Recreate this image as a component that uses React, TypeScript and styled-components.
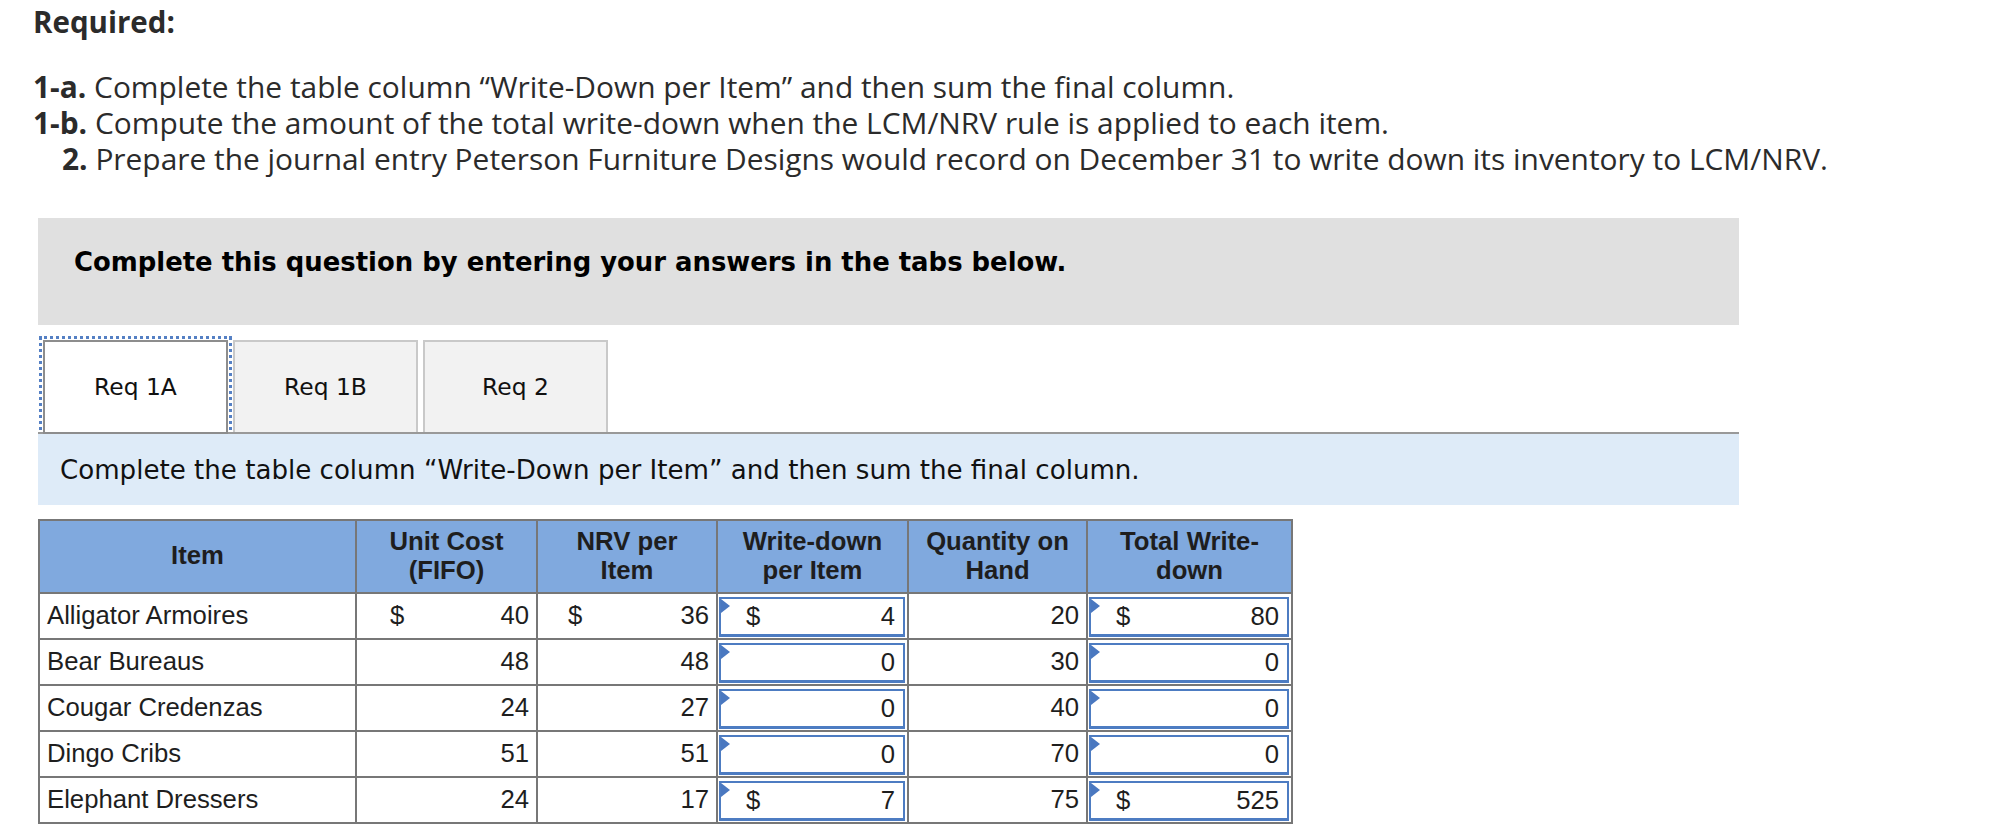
import React from "react";
import styled, { createGlobalStyle } from "styled-components";

const Global = createGlobalStyle`
  html, body { margin: 0; padding: 0; background: #fff; }
  body { font-family: "Liberation Sans", Arial, sans-serif; color: #222; }
  * { box-sizing: border-box; }
`;

const Page = styled.div`
  display: flex;
  flex-direction: column;
`;

const Required = styled.section`
  padding-left: 33px;
  font-family: "Open Sans", Lato, sans-serif;
  color: #2b2b2b;
`;

const Title = styled.h2`
  margin: 0;
  font-size: 29.5px;
  line-height: 36px;
  font-weight: 700;
  padding-top: 4px;
`;

const List = styled.div`
  margin-top: 29px;
  display: flex;
  flex-direction: column;
`;

const ListLine = styled.div<{ $indent?: number }>`
  font-size: 29.9px;
  line-height: 36px;
  height: 36px;
  padding-left: ${(p) => p.$indent ?? 0}px;
  white-space: nowrap;
  b { font-weight: 700; }
`;

const Work = styled.div`
  margin-left: 38px;
  width: 1701px;
  display: flex;
  flex-direction: column;
`;

const Banner = styled.div`
  margin-top: 41px;
  height: 107px;
  background: #e0e0e0;
  padding: 29px 36px 0;
  font-family: "DejaVu Sans", Verdana, sans-serif;
  font-weight: 700;
  font-size: 25.9px;
  line-height: 30px;
  color: #000;
  white-space: nowrap;
`;

const TabRow = styled.div`
  margin-top: 15px;
  display: flex;
  gap: 5px;
  padding-left: 5px;
  border-bottom: 2px solid #999;
`;

const Tab = styled.div<{ $active?: boolean }>`
  width: 185px;
  height: ${(p) => (p.$active ? "94px" : "92px")};
  margin-bottom: ${(p) => (p.$active ? "-2px" : "0")};
  display: flex;
  align-items: center;
  justify-content: center;
  font-family: "DejaVu Sans", Verdana, sans-serif;
  font-size: 23.4px;
  color: #111;
  background: ${(p) => (p.$active ? "#fff" : "#f2f2f2")};
  border: 2px solid ${(p) => (p.$active ? "#8d8d8d" : "#c9c9c9")};
  border-bottom: ${(p) => (p.$active ? "2px solid #8d8d8d" : "none")};
  outline: ${(p) => (p.$active ? "3px dotted #5580c4" : "none")};
  outline-offset: 1px;
  cursor: pointer;
`;

const Instruction = styled.div`
  height: 71px;
  background: #deebf8;
  padding: 19px 0 0 22px;
  font-family: "DejaVu Sans", Verdana, sans-serif;
  font-size: 26.1px;
  line-height: 34px;
  color: #111;
  white-space: nowrap;
`;

const Table = styled.table`
  margin-top: 14px;
  border-collapse: collapse;
  table-layout: fixed;
  width: 1253px;
  border: 2px solid #777;
  font-family: "Liberation Sans", Arial, sans-serif;
  font-size: 25.7px;
  color: #1e1e1e;
`;

const Col = styled.col<{ $w: number }>`
  width: ${(p) => p.$w}px;
`;

const Th = styled.th`
  background: #80a9de;
  border: 2px solid #777;
  height: 73px;
  padding: 0 4px 2px;
  font-weight: 700;
  line-height: 29px;
  text-align: center;
  vertical-align: middle;
`;

const Td = styled.td<{ $input?: boolean }>`
  border: 2px solid #777;
  height: 46px;
  padding: ${(p) => (p.$input ? "2px 2px 1px 1px" : "0 0 2px")};
  vertical-align: middle;
`;

const ItemName = styled.div`
  padding-left: 7px;
  white-space: nowrap;
`;

const Amount = styled.div<{ $dollarPad?: number }>`
  display: flex;
  justify-content: space-between;
  align-items: center;
  padding: 0 7px 0 ${(p) => p.$dollarPad ?? 33}px;
`;

const InputBox = styled.div`
  position: relative;
  height: 40px;
  display: flex;
  justify-content: space-between;
  align-items: center;
  padding: 0 8px 0 25px;
  border: 2px solid #4d7cc2;
  border-bottom-width: 3px;
  background: #fff;
  &::before {
    content: "";
    position: absolute;
    left: 0;
    top: 0;
    width: 0;
    height: 0;
    border-left: 9px solid #4a78c0;
    border-top: 7px solid transparent;
    border-bottom: 7px solid transparent;
  }
`;

type Row = {
  name: string;
  cost: number;
  nrv: number;
  wd: number;
  qty: number;
  total: number;
  dollar: boolean;
  first?: boolean;
};

const rows: Row[] = [
  { name: "Alligator Armoires", cost: 40, nrv: 36, wd: 4, qty: 20, total: 80, dollar: true, first: true },
  { name: "Bear Bureaus", cost: 48, nrv: 48, wd: 0, qty: 30, total: 0, dollar: false },
  { name: "Cougar Credenzas", cost: 24, nrv: 27, wd: 0, qty: 40, total: 0, dollar: false },
  { name: "Dingo Cribs", cost: 51, nrv: 51, wd: 0, qty: 70, total: 0, dollar: false },
  { name: "Elephant Dressers", cost: 24, nrv: 17, wd: 7, qty: 75, total: 525, dollar: true },
];

const colWidths = [317, 181, 180, 191, 179, 205];

export default function App() {
  return (
    <>
      <Global />
      <Page>
        <Required>
          <Title>Required:</Title>
          <List>
            <ListLine>
              <b>1-a.</b> Complete the table column “Write-Down per Item” and then sum the final column.
            </ListLine>
            <ListLine>
              <b>1-b.</b> Compute the amount of the total write-down when the LCM/NRV rule is applied to each item.
            </ListLine>
            <ListLine $indent={29}>
              <b>2.</b> Prepare the journal entry Peterson Furniture Designs would record on December 31 to write down its inventory to LCM/NRV.
            </ListLine>
          </List>
        </Required>
        <Work>
          <Banner>Complete this question by entering your answers in the tabs below.</Banner>
          <TabRow>
            <Tab $active>Req 1A</Tab>
            <Tab>Req 1B</Tab>
            <Tab>Req 2</Tab>
          </TabRow>
          <Instruction>
            Complete the table column “Write-Down per Item” and then sum the final column.
          </Instruction>
          <Table>
            <colgroup>
              {colWidths.map((w, i) => (
                <Col key={i} $w={w} />
              ))}
            </colgroup>
            <thead>
              <tr>
                <Th>Item</Th>
                <Th>
                  Unit Cost
                  <br />
                  (FIFO)
                </Th>
                <Th>
                  NRV per
                  <br />
                  Item
                </Th>
                <Th>
                  Write-down
                  <br />
                  per Item
                </Th>
                <Th>
                  Quantity on
                  <br />
                  Hand
                </Th>
                <Th>
                  Total Write-
                  <br />
                  down
                </Th>
              </tr>
            </thead>
            <tbody>
              {rows.map((r) => (
                <tr key={r.name}>
                  <Td>
                    <ItemName>{r.name}</ItemName>
                  </Td>
                  <Td>
                    <Amount $dollarPad={33}>
                      <span>{r.first ? "$" : ""}</span>
                      <span>{r.cost}</span>
                    </Amount>
                  </Td>
                  <Td>
                    <Amount $dollarPad={30}>
                      <span>{r.first ? "$" : ""}</span>
                      <span>{r.nrv}</span>
                    </Amount>
                  </Td>
                  <Td $input>
                    <InputBox>
                      <span>{r.dollar ? "$" : ""}</span>
                      <span>{r.wd}</span>
                    </InputBox>
                  </Td>
                  <Td>
                    <Amount>
                      <span />
                      <span>{r.qty}</span>
                    </Amount>
                  </Td>
                  <Td $input>
                    <InputBox>
                      <span>{r.dollar ? "$" : ""}</span>
                      <span>{r.total}</span>
                    </InputBox>
                  </Td>
                </tr>
              ))}
            </tbody>
          </Table>
        </Work>
      </Page>
    </>
  );
}
